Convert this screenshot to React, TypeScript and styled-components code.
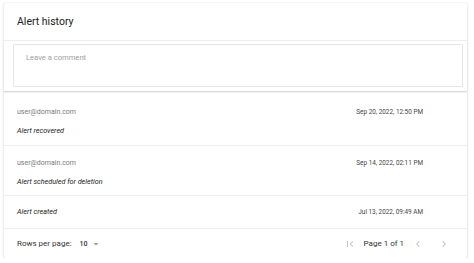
import React from "react";
import styled, { createGlobalStyle } from "styled-components";

const GlobalStyle = createGlobalStyle`
  html, body {
    margin: 0;
    padding: 0;
    background: #fff;
    font-family: Roboto, "Liberation Sans", Arial, sans-serif;
  }
`;

interface HistoryItem {
  user?: string;
  message: string;
  date: string;
}

const items: HistoryItem[] = [
  { user: "user@domain.com", message: "Alert recovered", date: "Sep 20, 2022, 12:50 PM" },
  { user: "user@domain.com", message: "Alert scheduled for deletion", date: "Sep 14, 2022, 02:11 PM" },
  { message: "Alert created", date: "Jul 13, 2022, 09:49 AM" },
];

const Page = styled.div`
  padding: 3px 0 0 4px;
`;

const Card = styled.div`
  width: 463px;
  background: #fff;
  border-radius: 2px;
  box-shadow: 0 1px 3px rgba(0, 0, 0, 0.18), 0 0 1px rgba(0, 0, 0, 0.12);
  display: flex;
  flex-direction: column;
`;

const Header = styled.div`
  height: 37px;
  display: flex;
  align-items: center;
  padding: 0 13px;
  border-bottom: 1px solid #eeeeee;
  font-size: 10.5px;
  color: #212121;
`;

const CommentSection = styled.div`
  padding: 3px 4px 4px 9px;
  border-bottom: 1px solid #d9d9d9;
  box-shadow: 0 1px 1px rgba(0, 0, 0, 0.05);
`;

const CommentBox = styled.textarea`
  display: block;
  box-sizing: border-box;
  width: 100%;
  height: 43px;
  margin: 0;
  padding: 8px 12px;
  border: 1px solid #e6e6e6;
  border-radius: 1px;
  resize: none;
  outline: none;
  font-family: inherit;
  font-size: 7.6px;
  line-height: 9px;
  color: #212121;

  &::placeholder {
    color: #a0a0a0;
  }
`;

const Row = styled.div<{ $first: boolean; $hasUser: boolean }>`
  display: flex;
  justify-content: space-between;
  align-items: flex-start;
  padding: ${({ $first, $hasUser }) =>
    $hasUser ? ($first ? "15px" : "12px") : "11px"}
    44px ${({ $first, $hasUser }) => ($hasUser ? ($first ? "9px" : "8px") : "11px")} 13px;
  border-bottom: 1px solid #eeeeee;
`;

const RowBody = styled.div`
  display: flex;
  flex-direction: column;
  gap: 9px;
`;

const User = styled.div`
  font-size: 7px;
  line-height: 10px;
  color: #7a7a7a;
`;

const Message = styled.div`
  font-size: 7.2px;
  line-height: 10px;
  font-style: italic;
  color: #222;
`;

const DateText = styled.div`
  font-size: 6.4px;
  line-height: 10px;
  color: #444;
`;

const Footer = styled.div`
  height: 29px;
  display: flex;
  align-items: center;
  justify-content: space-between;
  padding: 0 17px 0 13px;
`;

const RowsPer = styled.div`
  display: flex;
  align-items: center;
  font-size: 8px;
  color: #333;
`;

const RowsValue = styled.span`
  margin-left: 8px;
  font-size: 7px;
  font-weight: 500;
  color: #333;
`;

const Pager = styled.div`
  display: flex;
  align-items: center;
`;

const PageLabel = styled.span`
  font-size: 8px;
  color: #333;
  margin: 0 8px;
`;

const IconButton = styled.span<{ $gap?: number; $tone?: string }>`
  display: flex;
  width: 12px;
  height: 12px;
  margin-left: ${({ $gap }) => ($gap ? `${$gap}px` : "0")};
  color: ${({ $tone }) => $tone || "#c4c4c4"};
`;

const Icon = ({ d }: { d: string }) => (
  <svg width="12" height="12" viewBox="0 0 24 24" fill="currentColor">
    <path d={d} />
  </svg>
);

const App = () => (
  <>
    <GlobalStyle />
    <Page>
      <Card>
        <Header>Alert history</Header>
        <CommentSection>
          <CommentBox placeholder="Leave a comment" />
        </CommentSection>
        {items.map((item, i) => (
          <Row key={i} $first={i === 0} $hasUser={!!item.user}>
            <RowBody>
              {item.user && <User>{item.user}</User>}
              <Message>{item.message}</Message>
            </RowBody>
            <DateText>{item.date}</DateText>
          </Row>
        ))}
        <Footer>
          <RowsPer>
            Rows per page:
            <RowsValue>10</RowsValue>
            <IconButton $gap={2} $tone="#9e9e9e">
              <Icon d="M7 10l5 5 5-5z" />
            </IconButton>
          </RowsPer>
          <Pager>
            <IconButton>
              <Icon d="M18.41 16.59L13.82 12l4.59-4.59L17 6l-6 6 6 6zM6 6h2v12H6z" />
            </IconButton>
            <PageLabel>Page 1 of 1</PageLabel>
            <IconButton>
              <Icon d="M15.41 7.41L14 6l-6 6 6 6 1.41-1.41L10.83 12z" />
            </IconButton>
            <IconButton $gap={14}>
              <Icon d="M10 6L8.59 7.41 13.17 12l-4.58 4.59L10 18l6-6z" />
            </IconButton>
          </Pager>
        </Footer>
      </Card>
    </Page>
  </>
);

export default App;
